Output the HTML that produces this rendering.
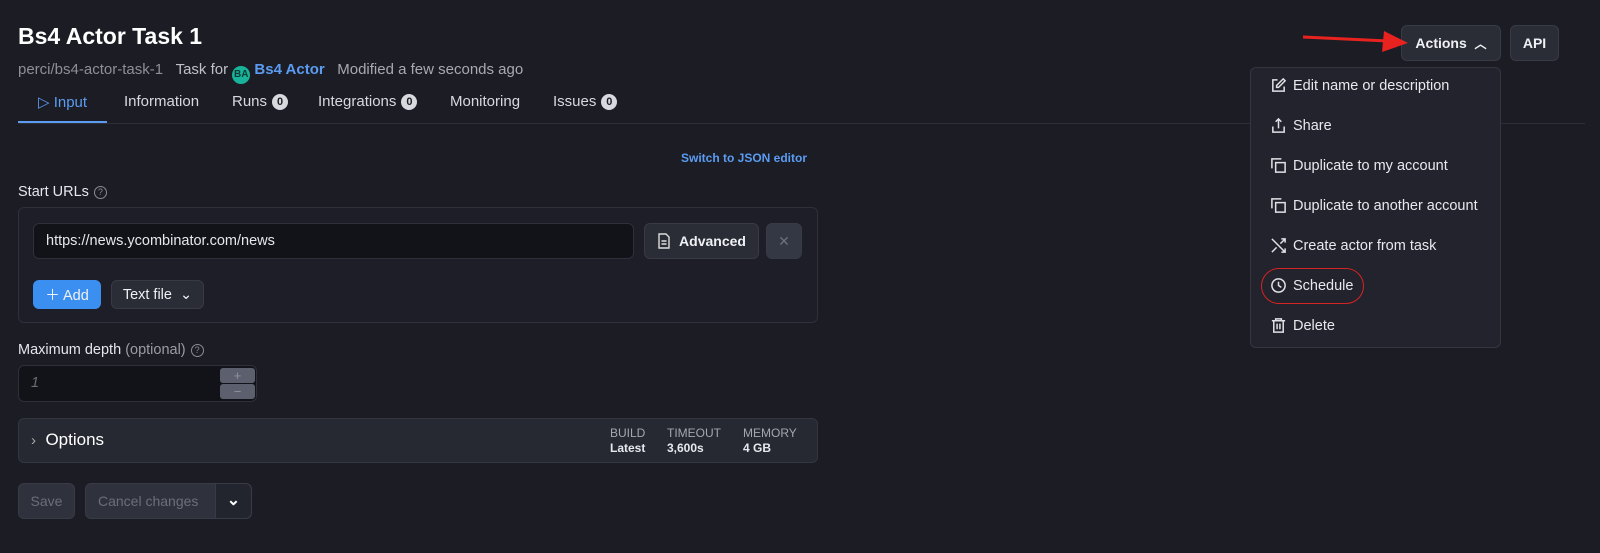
<!DOCTYPE html>
<html><head><style>
*{box-sizing:border-box;margin:0;padding:0}
body{width:1600px;height:553px;background:#1b1c24;font-family:"Liberation Sans",sans-serif;color:#e6e7ec;position:relative;overflow:hidden}
.a{position:absolute}
.btn{position:absolute;background:#2a2c36;border:1px solid #383a46;border-radius:6px;display:flex;align-items:center;justify-content:center;font-weight:bold;font-size:14px;color:#f0f1f4}
.badge{display:inline-block;width:16px;height:16px;border-radius:8px;background:#d8d9de;color:#1b1c24;font-size:11px;font-weight:bold;text-align:center;line-height:16px;margin-left:5px;vertical-align:1px}
.tab{position:absolute;top:93px;font-size:15px;color:#d8d9df}
.mi{position:absolute;left:1270px;font-size:14.5px;color:#e8e9ee;display:flex;align-items:center;gap:6px}
.mi svg{width:17px;height:17px;stroke:#e0e1e6;fill:none;stroke-width:1.6}
.q{display:inline-block;width:13px;height:13px;border:1px solid #8a8c96;border-radius:7px;font-size:9px;color:#8a8c96;text-align:center;line-height:11px;vertical-align:1px;margin-left:5px}
</style></head><body>
<div class="a" style="left:18px;top:23px;font-size:23px;font-weight:bold;color:#fff">Bs4 Actor Task 1</div>
<div class="a" style="left:18px;top:61px;font-size:15px;color:#8d8f99;white-space:nowrap">perci/bs4-actor-task-1 &nbsp;&nbsp;<span style="color:#bfc1c8">Task for</span> <span style="display:inline-block;width:18px;height:18px;border-radius:9px;background:#18b39a;color:#0d3a33;font-size:10px;font-weight:bold;text-align:center;line-height:18px;vertical-align:-3px">BA</span> <b style="color:#5b9cf2">Bs4 Actor</b> &nbsp;&nbsp;<span style="color:#a8aab2">Modified a few seconds ago</span></div>
<div class="tab" style="left:38px;color:#5b9cf2">▷ Input</div>
<div class="tab" style="left:124px">Information</div>
<div class="tab" style="left:232px">Runs<span class="badge">0</span></div>
<div class="tab" style="left:318px">Integrations<span class="badge">0</span></div>
<div class="tab" style="left:450px">Monitoring</div>
<div class="tab" style="left:553px">Issues<span class="badge">0</span></div>
<div class="a" style="left:18px;top:123px;width:1567px;height:1px;background:#2c2e38"></div>
<div class="a" style="left:18px;top:121px;width:89px;height:2px;background:#5b9cf2"></div>

<div class="a" style="left:681px;top:151px;font-size:12px;font-weight:bold;color:#5b9cf2">Switch to JSON editor</div>
<div class="a" style="left:18px;top:184px;font-size:14.5px">Start URLs<span class="q">?</span></div>
<div class="a" style="left:18px;top:207px;width:800px;height:116px;border:1px solid #2e303a;border-radius:6px;background:#1d1e27"></div>
<div class="a" style="left:33px;top:223px;width:601px;height:36px;border:1px solid #2e303a;border-radius:6px;background:#121318;font-size:14.5px;padding:9px 12px">https://news.ycombinator.com/news</div>
<div class="btn" style="left:644px;top:223px;width:115px;height:36px"><svg width="14" height="16" viewBox="0 0 14 16" style="margin-right:8px" fill="none" stroke="#ddd" stroke-width="1.4"><path d="M2 1h7l3 3v11H2z M4.5 8h5 M4.5 11h5"/></svg>Advanced</div>
<div class="btn" style="left:766px;top:223px;width:36px;height:36px;background:#343744;color:#6e7080;font-weight:normal">✕</div>
<div class="btn" style="left:33px;top:280px;width:68px;height:29px;background:#3b8ff0;border-color:#3b8ff0;font-weight:normal;font-size:14.5px">＋ Add</div>
<div class="btn" style="left:111px;top:280px;width:93px;height:29px;font-weight:normal;font-size:14.5px">Text file &nbsp;⌄</div>

<div class="a" style="left:18px;top:342px;font-size:14.5px">Maximum depth <span style="color:#9a9ca6">(optional)</span><span class="q">?</span></div>
<div class="a" style="left:18px;top:365px;width:239px;height:37px;border:1px solid #2e303a;border-radius:6px;background:#121318;font-size:14.5px;color:#6a6c76;font-style:italic;padding:9px 12px">1</div>
<div class="a" style="left:220px;top:368px;width:35px;height:15px;background:#5c5f6e;border-radius:3px;color:#8f92a0;font-size:13px;text-align:center;line-height:15px">+</div>
<div class="a" style="left:220px;top:384px;width:35px;height:15px;background:#5c5f6e;border-radius:3px;color:#8f92a0;font-size:13px;text-align:center;line-height:15px">−</div>

<div class="a" style="left:18px;top:418px;width:800px;height:45px;border:1px solid #33353f;border-radius:6px;background:#262832"></div>
<div class="a" style="left:31px;top:430px;font-size:17px;color:#fff"><span style="color:#aaa;font-size:15px">›</span>&nbsp;&nbsp;Options</div>
<div class="a" style="left:610px;top:426px;font-size:12px;line-height:15px;color:#a4a6b0">BUILD<br><b style="color:#e8e9ee">Latest</b></div>
<div class="a" style="left:667px;top:426px;font-size:12px;line-height:15px;color:#a4a6b0">TIMEOUT<br><b style="color:#e8e9ee">3,600s</b></div>
<div class="a" style="left:743px;top:426px;font-size:12px;line-height:15px;color:#a4a6b0">MEMORY<br><b style="color:#e8e9ee">4 GB</b></div>

<div class="btn" style="left:18px;top:483px;width:57px;height:36px;background:#2f313c;color:#6c6e7a;font-weight:normal">Save</div>
<div class="btn" style="left:85px;top:483px;width:167px;height:36px;background:#2f313c;justify-content:flex-start;font-weight:normal;color:#6c6e7a;padding-left:12px">Cancel changes</div>
<div class="a" style="left:215px;top:484px;width:36px;height:34px;background:#23252e;border-left:1px solid #383a46;border-radius:0 6px 6px 0;color:#fff;text-align:center;line-height:34px;font-weight:bold">⌄</div>

<div class="btn" style="left:1401px;top:25px;width:100px;height:36px">Actions &nbsp;<span style="font-size:12px">︿</span></div>
<div class="btn" style="left:1510px;top:25px;width:49px;height:36px">API</div>
<svg class="a" style="left:1300px;top:28px" width="110" height="24"><path d="M3 9 L88 13" stroke="#e8231f" stroke-width="3"/><path d="M84 3 L108 15 L82 24 Z" fill="#e8231f"/></svg>

<div class="a" style="left:1250px;top:67px;width:251px;height:281px;background:#22232c;border:1px solid #34363f;border-radius:6px"></div>
<div class="mi" style="top:77px"><svg viewBox="0 0 18 18"><path d="M8 3H3v12h12v-5 M14 2l2 2-7 7H7V9z"/></svg>Edit name or description</div>
<div class="mi" style="top:117px"><svg viewBox="0 0 18 18"><path d="M3 10v6h12v-6 M9 12V2 M6 5l3-3 3 3"/></svg>Share</div>
<div class="mi" style="top:157px"><svg viewBox="0 0 18 18"><path d="M2 12V2h10 M6 6h10v10H6z"/></svg>Duplicate to my account</div>
<div class="mi" style="top:197px"><svg viewBox="0 0 18 18"><path d="M2 12V2h10 M6 6h10v10H6z"/></svg>Duplicate to another account</div>
<div class="mi" style="top:237px"><svg viewBox="0 0 18 18"><path d="M2 2l14 14 M12 16h4v-4 M16 2L11 7 M12 2h4v4 M2 16l5-5"/></svg>Create actor from task</div>
<div class="mi" style="top:277px"><svg viewBox="0 0 18 18"><circle cx="9" cy="9" r="7"/><path d="M9 5v4l3 2"/></svg>Schedule</div>
<div class="a" style="left:1261px;top:268px;width:103px;height:36px;border:1.5px solid #d42424;border-radius:18px"></div>
<div class="mi" style="top:317px"><svg viewBox="0 0 18 18"><path d="M2 4h14 M6 4V2h6v2 M4 4v12h10V4 M7.5 7v6 M10.5 7v6"/></svg>Delete</div>
</body></html>
